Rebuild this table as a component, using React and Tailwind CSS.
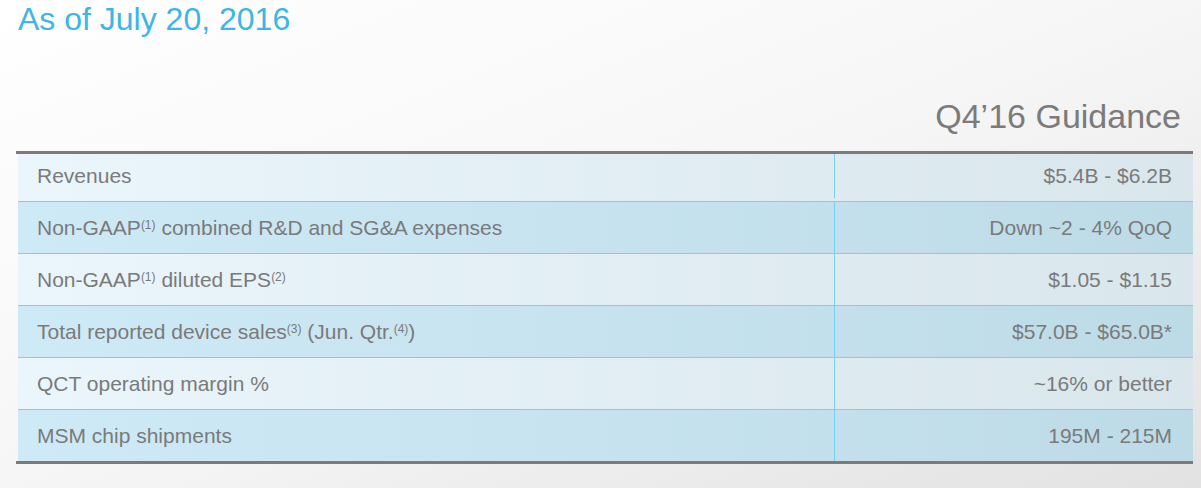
import React from 'react';

const ROWS = [
  { label: <>Revenues</>, value: '$5.4B - $6.2B' },
  {
    label: (
      <>
        Non-GAAP<sup className="text-[12px]">(1)</sup> combined R&amp;D and SG&amp;A expenses
      </>
    ),
    value: 'Down ~2 - 4% QoQ',
  },
  {
    label: (
      <>
        Non-GAAP<sup className="text-[12px]">(1)</sup> diluted EPS<sup className="text-[12px]">(2)</sup>
      </>
    ),
    value: '$1.05 - $1.15',
  },
  {
    label: (
      <>
        Total reported device sales<sup className="text-[12px]">(3)</sup> (Jun. Qtr.<sup className="text-[12px]">(4)</sup>)
      </>
    ),
    value: '$57.0B - $65.0B*',
  },
  { label: <>QCT operating margin %</>, value: '~16% or better' },
  { label: <>MSM chip shipments</>, value: '195M - 215M' },
];

export default function App() {
  return (
    <div
      className="w-[1201px] h-[488px] overflow-hidden bg-linear-to-br from-white via-[#f6f6f6] to-[#e2e2e2]"
      style={{ fontFamily: '"Liberation Sans", Arial, sans-serif' }}
    >
      <h1 className="pt-[3px] pl-[18px] text-[32px] leading-[32px] text-[#3db5e8] font-normal">
        As of July 20, 2016
      </h1>

      <div className="mt-[64px] w-[1193px] flex justify-end pr-[12px]">
        <h2 className="text-[34px] leading-[34px] text-[#7b7b7b] font-normal">Q4’16 Guidance</h2>
      </div>

      {/* guidance table */}
      <div className="mt-[18px] ml-[16px] w-[1177px] border-y-[3px] border-[#7b7b7b] pl-[2px]">
        {ROWS.map((r, i) => (
          <div
            key={i}
            className={
              'flex text-[21px] text-[#7a7a7a] ' +
              (i === 0 ? 'h-[47px] pb-[3px] ' : 'h-[52px] border-t-[1.5px] border-[#7acef2] ') +
              (i % 2 === 0
                ? 'bg-linear-to-r from-[#eaf6fc] to-[#d9e6ec]'
                : 'bg-linear-to-r from-[#cfeaf7] to-[#bddbe7]')
            }
          >
            <div className="w-[817px] shrink-0 border-r-[1.5px] border-[#7acef2] flex items-center pl-[19px]">
              <span>{r.label}</span>
            </div>
            <div className="flex-1 flex items-center justify-end pr-[21px]">{r.value}</div>
          </div>
        ))}
      </div>
    </div>
  );
}
